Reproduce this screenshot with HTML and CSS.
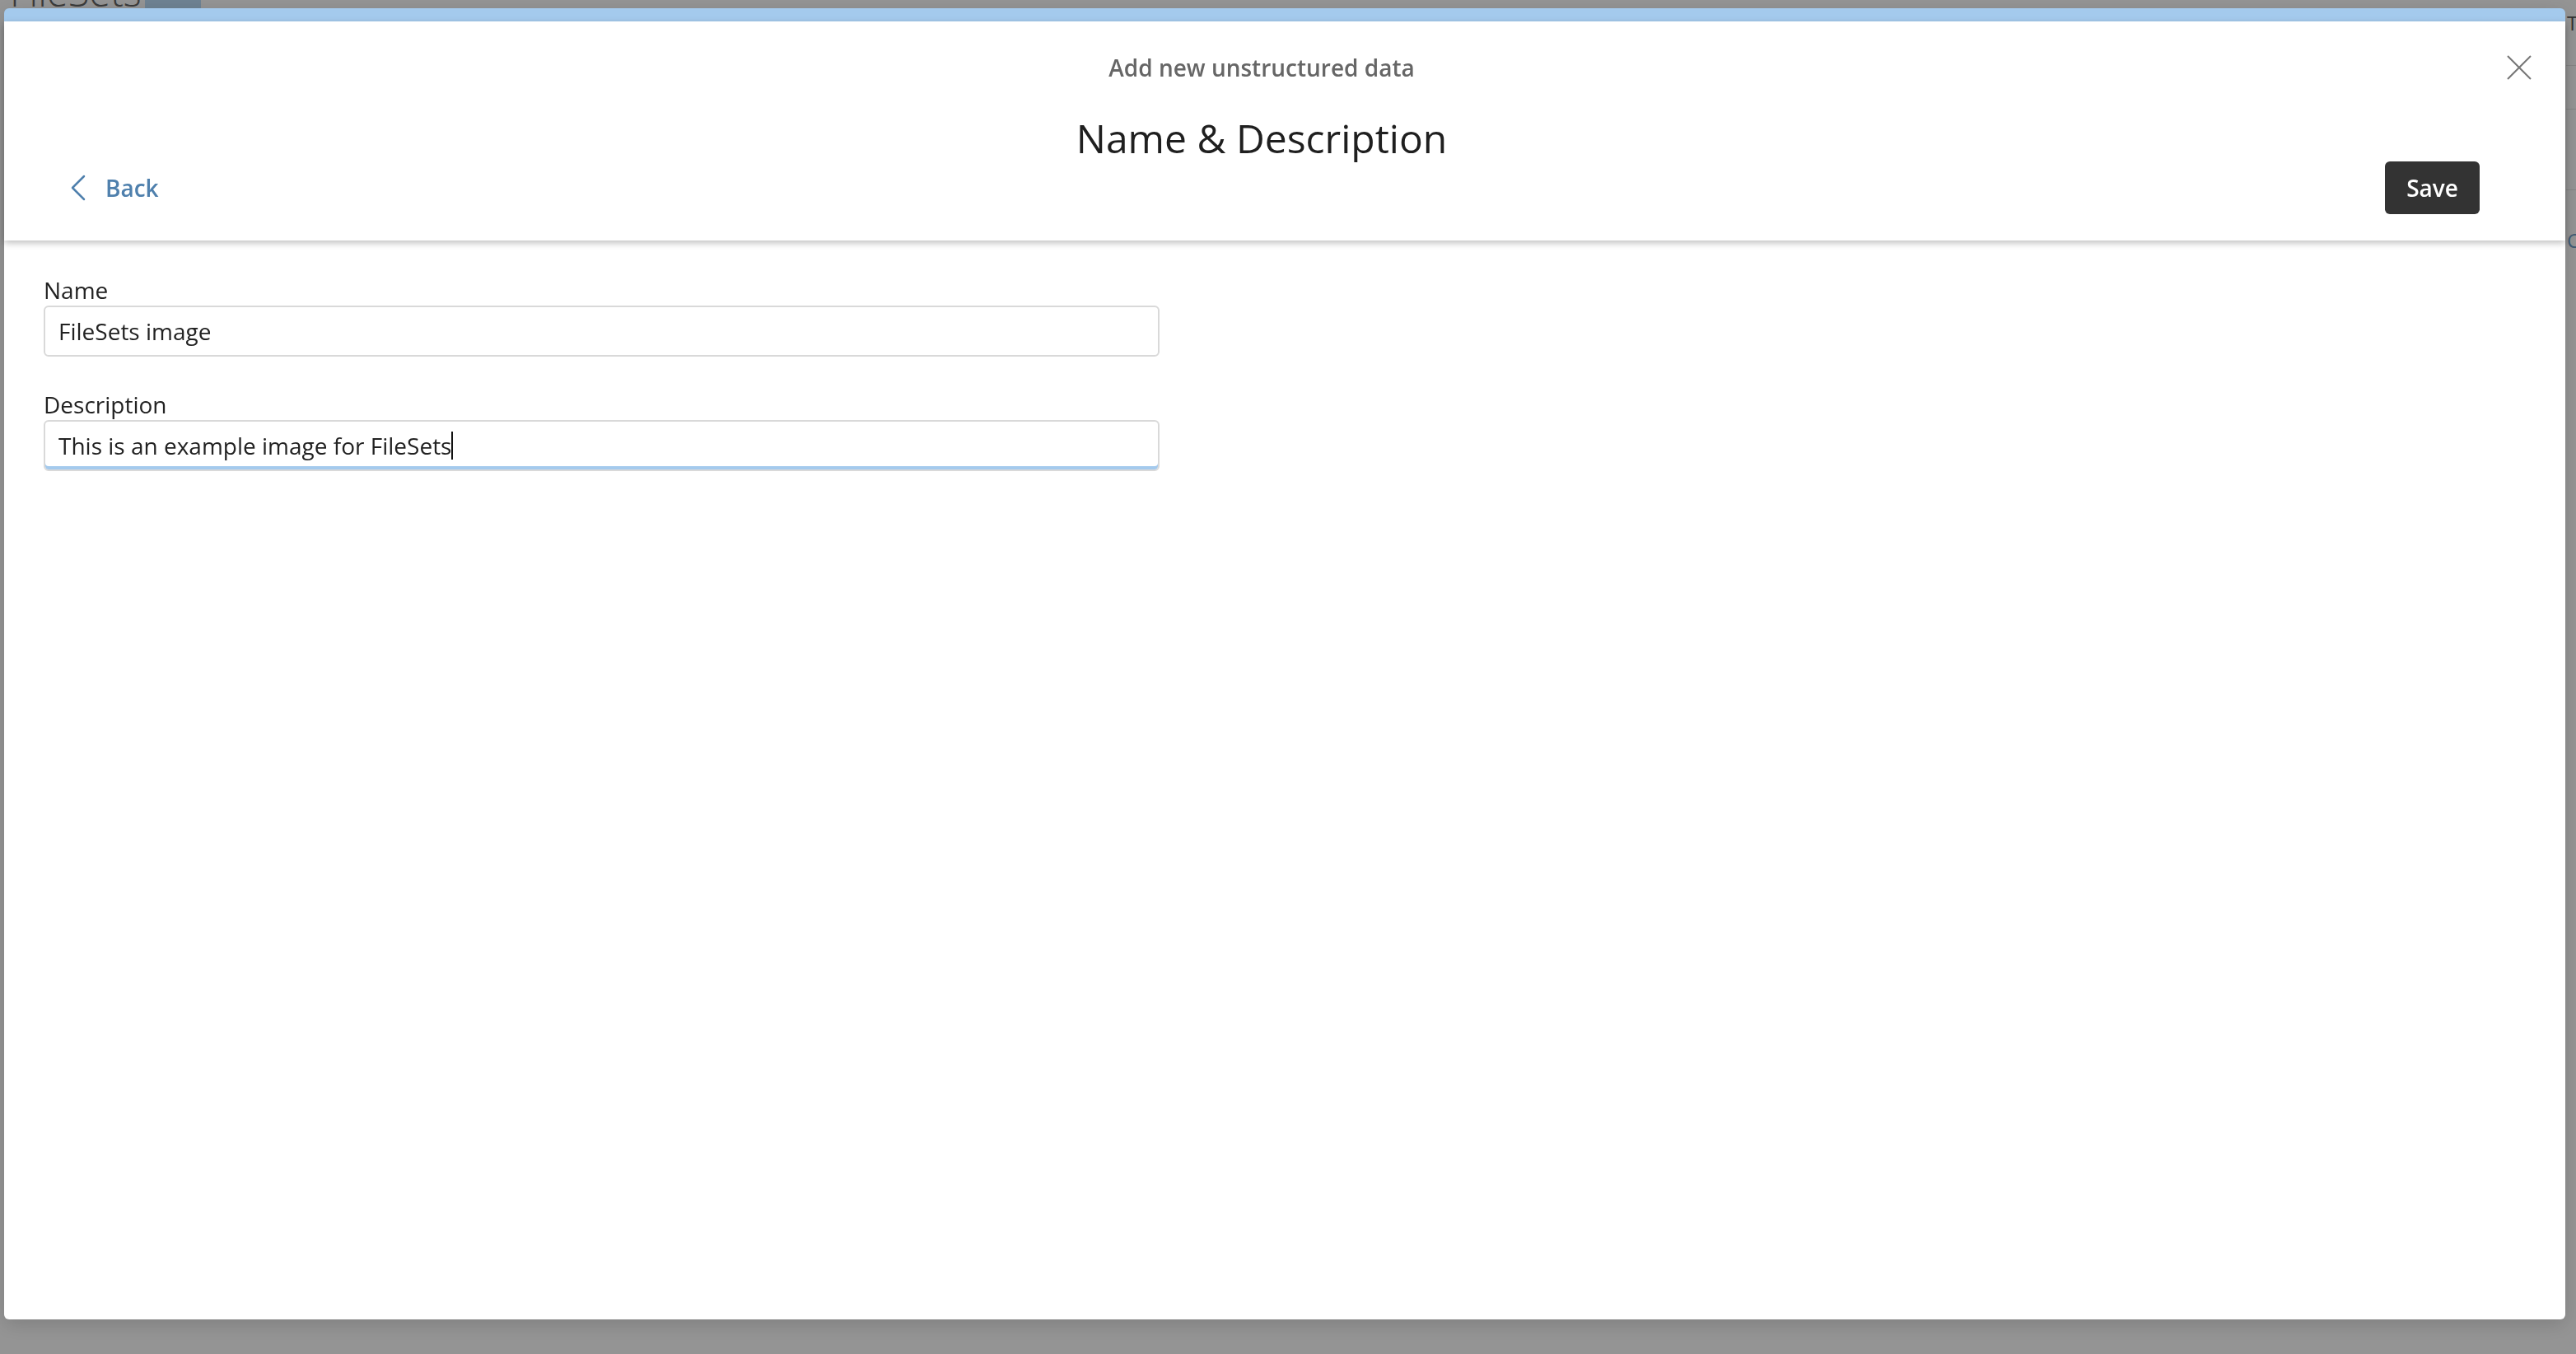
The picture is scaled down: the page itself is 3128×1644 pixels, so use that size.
FILE: index.html
```html
<!DOCTYPE html>
<html lang="en">
<head>
    <meta charset="UTF-8">
    <meta name="viewport" content="width=device-width, initial-scale=1.0">
    <title>FileSets - Add new unstructured data</title>
    <link rel="stylesheet" href="styles.css">
</head>
<body>
    <div class="page">
        <div class="page-main">
            <div class="brand">FileSets <span class="beta">BETA</span></div>
        </div>
        <div class="page-side">
            <div class="side-head">Total</div>
            <div class="side-row"></div>
            <div class="side-row side-row-tall"></div>
            <a class="side-link" href="#">Clear</a>
        </div>
    </div>
    <div class="overlay"></div>

    <div class="modal">
        <div class="modal-header">
            <div class="modal-subtitle">Add new unstructured data</div>
            <h1 class="modal-title">Name &amp; Description</h1>
            <div class="modal-actions">
                <button type="button" class="back-btn">
                    <svg width="18" height="32" viewBox="0 0 18 32"><polyline points="16,2 2,16 16,30" fill="none" stroke="currentColor" stroke-width="2.5" stroke-linecap="round" stroke-linejoin="round"/></svg>
                    Back
                </button>
                <button type="button" class="save-btn">Save</button>
            </div>
            <button type="button" class="close-btn" aria-label="Close">
                <svg width="30" height="30" viewBox="0 0 30 30"><path d="M1 1 L29 29 M29 1 L1 29" stroke="#777" stroke-width="2" fill="none"/></svg>
            </button>
        </div>
        <form class="modal-body" action="#">
            <div class="field">
                <label for="name">Name</label>
                <input type="text" id="name" name="name" value="FileSets image">
            </div>
            <div class="field">
                <label for="description">Description</label>
                <div class="input-wrap">
                    <input type="text" id="description" name="description" class="is-focused" value="This is an example image for FileSets">
                    <span class="caret" id="caret"></span>
                </div>
            </div>
        </form>
    </div>

    <script>
        // put the fake text cursor right after the typed value
        window.addEventListener('load', function () {
            let input = document.getElementById('description');
            let caret = document.getElementById('caret');
            let style = getComputedStyle(input);
            let ctx = document.createElement('canvas').getContext('2d');
            ctx.font = style.fontWeight + ' ' + style.fontSize + ' ' + style.fontFamily;
            let textWidth = ctx.measureText(input.value).width;
            let offset = parseFloat(style.borderLeftWidth) + parseFloat(style.paddingLeft);
            caret.style.left = Math.round(offset + textWidth) + 'px';
        });
    </script>
</body>
</html>
```

FILE: styles.css
```css
body {
    margin: 0;
    font-family: "Open Sans", Arial, sans-serif;
    background-color: #fff;
    overflow: hidden;
}

/* page behind the modal */
.page {
    display: flex;
    height: 100vh;
    overflow: hidden;
}

.page-main {
    flex: none;
    width: 3116px;
    padding-left: 12px;
    box-sizing: border-box;
}

.brand {
    margin-top: -33px;
    font-size: 47px;
    font-weight: 300;
    line-height: 47px;
    color: #666;
    display: flex;
    align-items: center;
    gap: 4px;
}

.beta {
    display: inline-block;
    width: 68px;
    height: 44px;
    background-color: #bee0fb;
    color: #fff;
    font-size: 22px;
    text-align: center;
    line-height: 44px;
}

.page-side {
    flex: none;
    width: 300px;
    font-size: 24px;
    color: #555;
}

.side-head {
    height: 80px;
    padding: 12px 0 0 1px;
    box-sizing: border-box;
    line-height: 32px;
    border-bottom: 1px solid #e5e5e5;
}

.side-row {
    height: 52px;
    border-bottom: 1px solid #e5e5e5;
}

.side-row-tall {
    height: 97px;
}

.side-link {
    display: block;
    margin-top: 45px;
    padding-left: 1px;
    line-height: 32px;
    color: #6f9fcc;
    text-decoration: none;
}

.overlay {
    position: fixed;
    inset: 0;
    background-color: rgba(0, 0, 0, 0.42);
}

/* modal */
.modal {
    position: fixed;
    top: 10px;
    left: 5px;
    right: 13px;
    bottom: 42px;
    display: flex;
    flex-direction: column;
    background-color: #fff;
    border-top: 16px solid #a4caed;
    border-radius: 6px;
    box-shadow: 0 6px 24px rgba(0, 0, 0, 0.15);
}

.modal-header {
    position: relative;
    z-index: 1;
    display: flex;
    flex-direction: column;
    align-items: center;
    padding: 38px 104px 32px 48px;
    background-color: #fff;
    box-shadow: 0 3px 8px rgba(0, 0, 0, 0.26);
}

.modal-subtitle {
    font-size: 28px;
    font-weight: 600;
    line-height: 36px;
    color: #666;
}

.modal-title {
    margin: 40px 0 0;
    font-size: 48px;
    font-weight: 400;
    line-height: 56px;
    color: #1f1f1f;
}

.modal-actions {
    align-self: stretch;
    display: flex;
    justify-content: space-between;
    align-items: center;
    height: 64px;
}

.back-btn {
    display: flex;
    align-items: center;
    gap: 24px;
    padding: 0 0 0 33px;
    background: none;
    border: none;
    font-family: inherit;
    font-size: 28px;
    font-weight: 600;
    color: #4f80ad;
    cursor: pointer;
}

.save-btn {
    width: 115px;
    height: 64px;
    padding: 0;
    background-color: #333;
    color: #fff;
    border: none;
    border-radius: 6px;
    font-family: inherit;
    font-size: 28px;
    font-weight: 600;
    cursor: pointer;
}

.close-btn {
    position: absolute;
    top: 41px;
    right: 41px;
    width: 30px;
    height: 30px;
    padding: 0;
    background: none;
    border: none;
    cursor: pointer;
}

.close-btn svg {
    display: block;
}

/* form */
.modal-body {
    display: flex;
    flex-direction: column;
    gap: 40px;
    padding: 42px 48px;
}

.field {
    display: flex;
    flex-direction: column;
    width: 1355px;
}

.field label {
    margin-bottom: 1px;
    font-size: 28px;
    line-height: 36px;
    color: #222;
}

.field input {
    width: 100%;
    height: 62px;
    padding: 0 16px;
    box-sizing: border-box;
    border: 2px solid #d9d9d9;
    border-radius: 6px;
    font-family: inherit;
    font-size: 28px;
    color: #222;
    outline: none;
}

.field input.is-focused {
    box-shadow: inset 0 -4px 0 #a4caed;
}

.input-wrap {
    position: relative;
}

.caret {
    position: absolute;
    top: 14px;
    left: 496px;
    width: 2px;
    height: 34px;
    background-color: #111;
}
```
